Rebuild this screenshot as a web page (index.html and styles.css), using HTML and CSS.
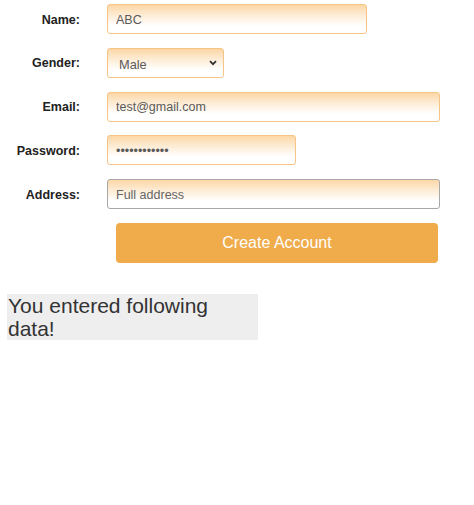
FILE: index.html
```html
<!DOCTYPE html>
<html>
<head>
<meta charset="utf-8">
<link rel="stylesheet" href="styles.css">
</head>
<body>
<form class="form">
  <label class="lbl" for="name">Name:</label>
  <div class="field"><input id="name" class="inp w-name" type="text" value="ABC"></div>

  <label class="lbl" for="gender">Gender:</label>
  <div class="field">
    <span class="sel-wrap">
      <select id="gender" class="inp sel"><option>Male</option><option>Female</option></select>
      <svg class="chev" width="8" height="6" viewBox="0 0 8 6"><path d="M1 1.2 L4 4.2 L7 1.2" fill="none" stroke="#333" stroke-width="1.8"/></svg>
    </span>
  </div>

  <label class="lbl" for="email">Email:</label>
  <div class="field"><input id="email" class="inp w-long" type="text" value="test@gmail.com"></div>

  <label class="lbl" for="pw">Password:</label>
  <div class="field"><input id="pw" class="inp w-pw" type="password" value="abcdefghijkl"></div>

  <label class="lbl" for="addr">Address:</label>
  <div class="field"><input id="addr" class="inp inp-gray w-long" type="text" placeholder="Full address"></div>

  <div></div>
  <div class="field"><button type="button" class="btn">Create Account</button></div>
</form>
<div class="output">You entered following data!</div>
</body>
</html>
```

FILE: styles.css
```css
html, body {
  margin: 0;
  padding: 0;
  background: #ffffff;
}
body {
  font-family: "Liberation Sans", Arial, sans-serif;
}
.form {
  display: grid;
  grid-template-columns: 80px 1fr;
  column-gap: 27px;
  row-gap: 13.8px;
  padding-top: 4px;
  align-items: center;
}
.lbl {
  text-align: right;
  font-weight: bold;
  font-size: 12.5px;
  color: #222;
  padding-top: 1px;
}
.field {
  display: flex;
  align-items: center;
}
.inp {
  box-sizing: border-box;
  height: 30px;
  border: 1px solid #f6c585;
  border-radius: 3px;
  background: linear-gradient(to bottom, #fcd7a6 0%, #fdebd3 35%, #ffffff 75%);
  font-family: "Liberation Sans", Arial, sans-serif;
  font-size: 12.5px;
  color: #5a5a5a;
  padding: 1px 8px 0;
  outline: none;
  margin: 0;
}
.inp-gray {
  border-color: #a8a8a8;
}
.inp::placeholder {
  color: #666;
}
.w-name { width: 260px; }
.w-long { width: 333px; }
.w-pw { width: 189px; }
.sel-wrap {
  position: relative;
  display: inline-block;
}
.sel {
  -webkit-appearance: none;
  appearance: none;
  width: 117px;
  padding: 4px 0 0 11px;
  font-size: 12.8px;
}
.chev {
  position: absolute;
  right: 7px;
  top: 12px;
  pointer-events: none;
}
.btn {
  margin-left: 9px;
  width: 322px;
  height: 40px;
  border: none;
  border-radius: 4px;
  background: #f0ab4b;
  color: #ffffff;
  font-family: "Liberation Sans", Arial, sans-serif;
  font-size: 16px;
  cursor: pointer;
}
.output {
  margin: 31px 0 0 7px;
  width: 251px;
  background: #eeeeee;
  color: #333;
  font-size: 21px;
  line-height: 23px;
  padding-left: 1px;
  box-sizing: border-box;
}
```
